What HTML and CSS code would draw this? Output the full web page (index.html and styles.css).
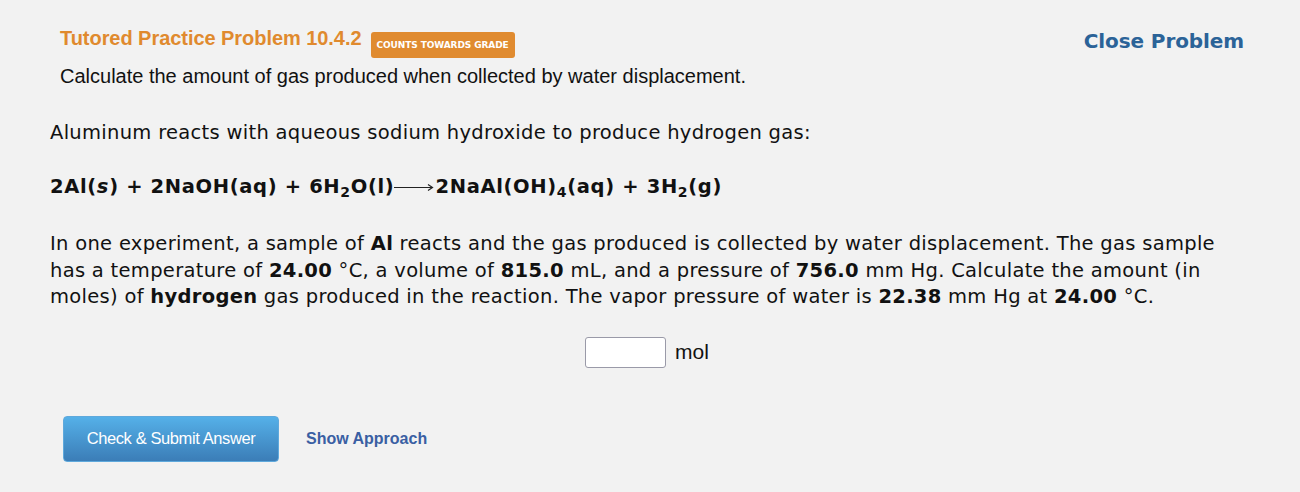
FILE: index.html
```html
<!DOCTYPE html>
<html>
<head>
<meta charset="utf-8">
<link rel="stylesheet" href="styles.css">
</head>
<body>
<div class="page">
  <header class="head">
    <div class="head-left">
      <div class="title-row">
        <h1 class="title">Tutored Practice Problem 10.4.2</h1>
        <span class="badge">COUNTS TOWARDS GRADE</span>
      </div>
      <p class="subtitle">Calculate the amount of gas produced when collected by water displacement.</p>
    </div>
    <a class="close" href="#">Close Problem</a>
  </header>
  <main class="body">
    <p class="intro">Aluminum reacts with aqueous sodium hydroxide to produce hydrogen gas:</p>
    <p class="eq">2Al(<i>s</i>) + 2NaOH(aq) + 6H<sub>2</sub>O(l)<svg class="arrow" width="40" height="10" viewBox="0 0 40 10"><path d="M0 5.5H38" stroke="#222" stroke-width="1.2" fill="none"/><path d="M34 2.5L38.5 5.5L34 8.5" stroke="#222" stroke-width="1.2" fill="none"/></svg>2NaAl(OH)<sub>4</sub>(aq) + 3H<sub>2</sub>(g)</p>
    <p class="para">In one experiment, a sample of <b>Al</b> reacts and the gas produced is collected by water displacement. The gas sample has a temperature of <b>24.00</b> °C, a volume of <b>815.0</b> mL, and a pressure of <b>756.0</b> mm Hg. Calculate the amount (in moles) of <b>hydrogen</b> gas produced in the reaction. The vapor pressure of water is <b>22.38</b> mm Hg at <b>24.00</b> °C.</p>
    <div class="answer">
      <input class="box" type="text">
      <span class="unit">mol</span>
    </div>
    <div class="actions">
      <button class="submit">Check &amp; Submit Answer</button>
      <a class="approach" href="#">Show Approach</a>
    </div>
  </main>
</div>
</body>
</html>
```
FILE: styles.css
```css
html, body {
  margin: 0;
  padding: 0;
  background: #f2f2f2;
}
body {
  width: 1300px;
  height: 492px;
  overflow: hidden;
}
.page {
  padding: 23px 56px 0 50px;
}
.head {
  display: flex;
  justify-content: space-between;
  align-items: flex-start;
  padding-left: 10px;
}
.title-row {
  display: flex;
  align-items: flex-start;
  gap: 9px;
}
.title {
  margin: 0;
  font: bold 20px/30px "Liberation Sans", Arial, sans-serif;
  color: #e08a2e;
  letter-spacing: -0.05px;
}
.badge {
  display: inline-flex;
  align-items: center;
  height: 26px;
  box-sizing: border-box;
  background: #e08b30;
  color: #fff;
  font: bold 9px/1 "DejaVu Sans", Verdana, sans-serif;
  letter-spacing: -0.1px;
  padding: 1px 6px 0;
  border-radius: 3px;
  margin-top: 9px;
}
.subtitle {
  margin: 6px 0 0;
  font: 20px/24px "Liberation Sans", Arial, sans-serif;
  color: #111;
}
.close {
  margin-top: 6px;
  font: bold 20px/24px "DejaVu Sans", Verdana, sans-serif;
  color: #2b6398;
  text-decoration: none;
  letter-spacing: -0.1px;
}
.body {
  font-family: "DejaVu Sans", Verdana, sans-serif;
  color: #111;
}
.intro {
  margin: 32px 0 0;
  font-size: 19.5px;
  line-height: 26px;
  letter-spacing: 0.3px;
}
.eq {
  margin: 28px 0 0;
  font-size: 19.5px;
  line-height: 26px;
  font-weight: bold;
  letter-spacing: 0.65px;
  display: flex;
  align-items: baseline;
}
.eq sub {
  font-size: 14px;
  line-height: 0;
  position: relative;
  top: 4px;
  vertical-align: baseline;
}
.arrow {
  align-self: center;
  margin: 0 1px 0 0;
}
.para {
  margin: 31px 0 0;
  font-size: 19.5px;
  line-height: 26.5px;
  letter-spacing: 0.3px;
  width: 1200px;
}
.answer {
  display: flex;
  justify-content: center;
  align-items: center;
  gap: 9px;
  margin-top: 26px;
}
.box {
  width: 81px;
  height: 31px;
  box-sizing: border-box;
  border: 1px solid #9a9aa8;
  border-radius: 3px;
  background: #fff;
  margin: 0;
}
.unit {
  font: 21px "Liberation Sans", Arial, sans-serif;
  color: #111;
}
.actions {
  display: flex;
  align-items: center;
  gap: 27px;
  margin-top: 48px;
  padding-left: 13px;
}
.submit {
  width: 216px;
  height: 46px;
  border: 1px solid #5fa9dc;
  border-radius: 4px;
  background: linear-gradient(#55b0e8, #3b7db7);
  color: #fff;
  font: 16.5px "Liberation Sans", Arial, sans-serif;
  letter-spacing: -0.4px;
  padding: 0;
}
.approach {
  font: bold 16px "Liberation Sans", Arial, sans-serif;
  color: #3a5fa3;
  text-decoration: none;
}
```
